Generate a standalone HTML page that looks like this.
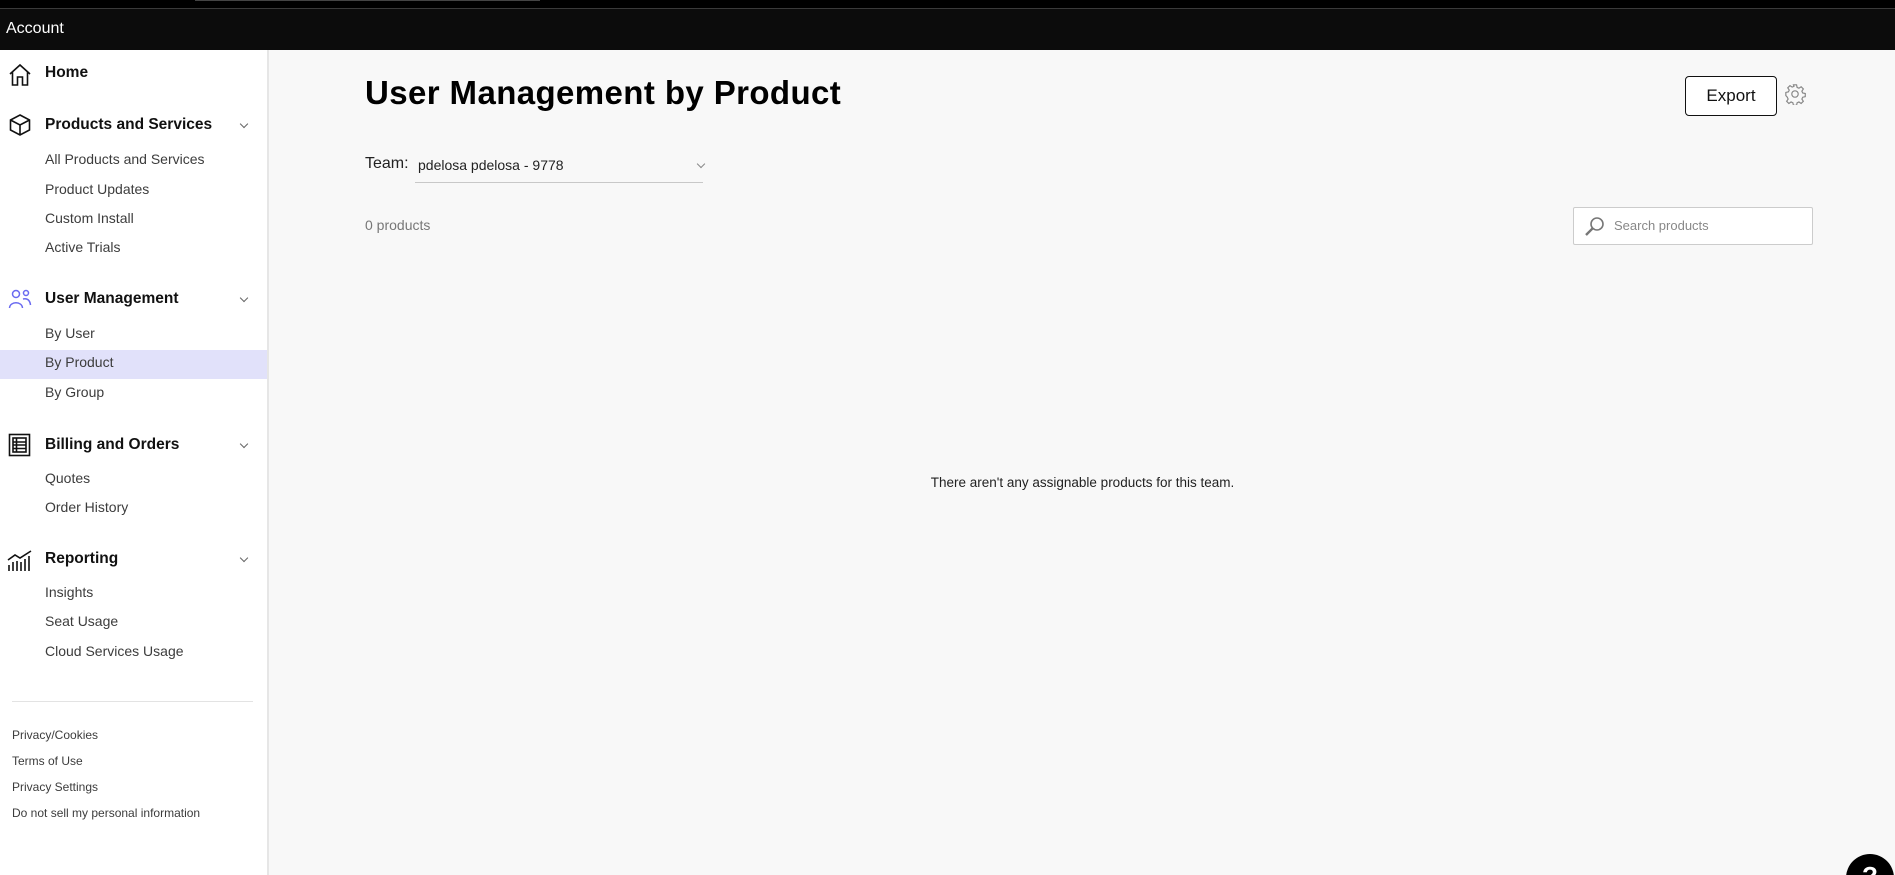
<!DOCTYPE html>
<html style="overflow:hidden;width:1895px;height:875px"><head><meta charset="utf-8"><style>
*{box-sizing:border-box;margin:0;padding:0}
body{width:1895px;height:875px;overflow:hidden;background:#f8f8f8;font-family:"Liberation Sans",sans-serif;color:#111;position:relative}
.wrap{position:absolute;left:0;top:0;width:1895px;height:875px;overflow:hidden}
.top0{position:absolute;left:0;top:0;width:1895px;height:9px;background:#000;border-bottom:1px solid #3a3a3a}
.top0 i{position:absolute;left:195px;top:0;width:345px;height:1px;background:#444}
.bar{position:absolute;left:0;top:9px;width:1895px;height:41px;background:#0c0c0c;color:#fff;font-size:16px;padding:11px 0 0 6px}
.side{position:absolute;left:0;top:50px;width:269px;height:825px;background:#fff;border-right:2px solid #e6e6e6}
.h{position:absolute;left:45px;font-size:15.5px;font-weight:bold;color:#111}
.s{position:absolute;left:45px;font-size:14px;color:#3c3c3c}
.f{position:absolute;left:12px;font-size:12px;color:#3c3c3c}
.chev{position:absolute;left:241px;width:6px;height:6px;border-right:1.3px solid #666;border-bottom:1.3px solid #666;transform:rotate(45deg)}
.ic{position:absolute;left:8px}
</style></head><body><div class="wrap">
<div class="top0"><i></i></div>
<div class="bar">Account</div>
<div class="side">
<svg class="ic" style="top:13px" width="24" height="24" viewBox="0 0 24 24" fill="none" stroke="#111" stroke-width="1.6"><path d="M2 11 L12 2 L22 11 M4.5 9 V22 H9.5 V14 H14.5 V22 H19.5 V9"/></svg>
<div class="h" style="top:14px">Home</div>
<svg class="ic" style="top:63px" width="24" height="24" viewBox="0 0 24 24" fill="none" stroke="#111" stroke-width="1.6"><path d="M12 2 L21.5 7 V17 L12 22 L2.5 17 V7 Z M2.5 7 L12 12 L21.5 7 M12 12 V22"/></svg>
<div class="h" style="top:66px">Products and Services</div><div class="chev" style="top:71px"></div>
<div class="s" style="top:101px">All Products and Services</div>
<div class="s" style="top:131px">Product Updates</div>
<div class="s" style="top:160px">Custom Install</div>
<div class="s" style="top:189px">Active Trials</div>
<svg class="ic" style="top:238px" width="24" height="22" viewBox="0 0 24 22" fill="none" stroke="#6a6af0" stroke-width="1.5"><circle cx="8" cy="6" r="3.5"/><circle cx="18" cy="5" r="2.5"/><path d="M1.5 20 C2 13 14 13 14.5 20 M15 11 C19 10 22 12 22.5 17"/></svg>
<div class="h" style="top:240px">User Management</div><div class="chev" style="top:245px"></div>
<div class="s" style="top:275px">By User</div>
<div style="position:absolute;left:0;top:300px;width:267px;height:29px;background:#e1e1fa"></div>
<div class="s" style="top:304px">By Product</div>
<div class="s" style="top:334px">By Group</div>
<svg class="ic" style="top:383px" width="23" height="24" viewBox="0 0 23 24" fill="none" stroke="#111" stroke-width="1.6"><rect x="1.5" y="1.5" width="20" height="21"/><rect x="5" y="5" width="13" height="14"/><path d="M5 9 H18 M5 12 H18 M5 15.5 H18 M8.5 5 V19"/></svg>
<div class="h" style="top:386px">Billing and Orders</div><div class="chev" style="top:391px"></div>
<div class="s" style="top:420px">Quotes</div>
<div class="s" style="top:449px">Order History</div>
<svg class="ic" style="top:500px;left:7px" width="26" height="22" viewBox="0 0 26 22" fill="none" stroke="#111" stroke-width="1.6"><path d="M1 10 L8 5 L13 8 L24 1 M2 21V15 M6 21V12 M10 21V11 M14 21V12 M18 21V9 M22 21V6"/></svg>
<div class="h" style="top:500px">Reporting</div><div class="chev" style="top:505px"></div>
<div class="s" style="top:534px">Insights</div>
<div class="s" style="top:563px">Seat Usage</div>
<div class="s" style="top:593px">Cloud Services Usage</div>
<div style="position:absolute;left:12px;top:651px;width:241px;height:1px;background:#e3e3e3"></div>
<div class="f" style="top:678px">Privacy/Cookies</div>
<div class="f" style="top:704px">Terms of Use</div>
<div class="f" style="top:730px">Privacy Settings</div>
<div class="f" style="top:756px">Do not sell my personal information</div>
</div>
<div style="position:absolute;left:365px;top:74px;font-size:33px;font-weight:bold;color:#000;letter-spacing:0.4px">User Management by Product</div>
<div style="position:absolute;left:1685px;top:76px;width:92px;height:40px;border:1.3px solid #111;border-radius:4px;background:#fff;font-size:17px;text-align:center;line-height:38px">Export</div>
<svg style="position:absolute;left:1784px;top:83px" width="22" height="22" viewBox="0 0 24 24" fill="none" stroke="#888" stroke-width="1.3"><circle cx="12" cy="12" r="3.5"/><path d="M10.3 2h3.4l.6 2.8 2 .9 2.4-1.6 2.4 2.4-1.6 2.4.9 2 2.8.6v3.4l-2.8.6-.9 2 1.6 2.4-2.4 2.4-2.4-1.6-2 .9-.6 2.8h-3.4l-.6-2.8-2-.9-2.4 1.6-2.4-2.4 1.6-2.4-.9-2L2 13.7v-3.4l2.8-.6.9-2-1.6-2.4 2.4-2.4 2.4 1.6 2-.9z"/></svg>
<div style="position:absolute;left:365px;top:155px;font-size:16px;color:#222">Team:</div>
<div style="position:absolute;left:418px;top:157px;font-size:14px;color:#222">pdelosa pdelosa - 9778</div>
<div class="chev" style="left:698px;top:161px;border-color:#888"></div>
<div style="position:absolute;left:415px;top:182px;width:288px;height:1px;background:#c8c8c8"></div>
<div style="position:absolute;left:365px;top:217px;font-size:14px;color:#777">0 products</div>
<div style="position:absolute;left:1573px;top:207px;width:240px;height:38px;border:1px solid #ccc;border-radius:2px;background:#fff"></div>
<svg style="position:absolute;left:1584px;top:216px" width="21" height="21" viewBox="0 0 21 21" fill="none" stroke="#777" stroke-width="1.6"><circle cx="13" cy="8" r="6"/><path d="M8.8 12.2 L2 19" stroke-width="2.4"/></svg>
<div style="position:absolute;left:1614px;top:218px;font-size:13px;color:#888">Search products</div>
<div style="position:absolute;left:270px;width:1625px;top:475px;text-align:center;font-size:13.5px;color:#222">There aren't any assignable products for this team.</div>
<div style="position:absolute;left:1846px;top:854px;width:48px;height:48px;border-radius:50%;background:#000;color:#fff;font-weight:bold;font-size:26px;text-align:center;line-height:44px">?</div>
</div></body></html>
